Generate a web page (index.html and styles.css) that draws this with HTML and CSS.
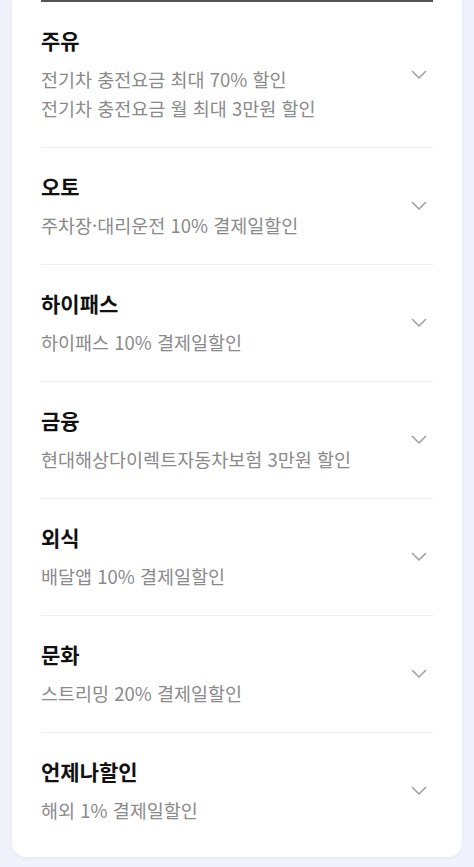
FILE: index.html
```html
<!DOCTYPE html>
<html lang="ko">
<head>
  <meta charset="UTF-8">
  <meta name="viewport" content="width=device-width, initial-scale=1.0">
  <title>카드 혜택</title>
  <link rel="stylesheet" href="styles.css">
</head>
<body>
  <div class="card">
    <ul class="benefits">
      <li class="benefit">
        <div class="text">
          <div class="name">주유</div>
          <div class="desc">전기차 충전요금 최대 70% 할인</div>
          <div class="desc">전기차 충전요금 월 최대 3만원 할인</div>
        </div>
        <svg class="chevron" viewBox="0 0 16 10"><path d="M1.5 1.5 L8 8 L14.5 1.5"/></svg>
      </li>
      <li class="benefit">
        <div class="text">
          <div class="name">오토</div>
          <div class="desc">주차장·대리운전 10% 결제일할인</div>
        </div>
        <svg class="chevron" viewBox="0 0 16 10"><path d="M1.5 1.5 L8 8 L14.5 1.5"/></svg>
      </li>
      <li class="benefit">
        <div class="text">
          <div class="name">하이패스</div>
          <div class="desc">하이패스 10% 결제일할인</div>
        </div>
        <svg class="chevron" viewBox="0 0 16 10"><path d="M1.5 1.5 L8 8 L14.5 1.5"/></svg>
      </li>
      <li class="benefit">
        <div class="text">
          <div class="name">금융</div>
          <div class="desc">현대해상다이렉트자동차보험 3만원 할인</div>
        </div>
        <svg class="chevron" viewBox="0 0 16 10"><path d="M1.5 1.5 L8 8 L14.5 1.5"/></svg>
      </li>
      <li class="benefit">
        <div class="text">
          <div class="name">외식</div>
          <div class="desc">배달앱 10% 결제일할인</div>
        </div>
        <svg class="chevron" viewBox="0 0 16 10"><path d="M1.5 1.5 L8 8 L14.5 1.5"/></svg>
      </li>
      <li class="benefit">
        <div class="text">
          <div class="name">문화</div>
          <div class="desc">스트리밍 20% 결제일할인</div>
        </div>
        <svg class="chevron" viewBox="0 0 16 10"><path d="M1.5 1.5 L8 8 L14.5 1.5"/></svg>
      </li>
      <li class="benefit">
        <div class="text">
          <div class="name">언제나할인</div>
          <div class="desc">해외 1% 결제일할인</div>
        </div>
        <svg class="chevron" viewBox="0 0 16 10"><path d="M1.5 1.5 L8 8 L14.5 1.5"/></svg>
      </li>
    </ul>
  </div>
</body>
</html>
```

FILE: styles.css
```css
body {
  margin: 0;
  padding: 0 12px 10px;
  background: #f0f3fb;
  font-family: "Noto Sans CJK KR", "Noto Sans", sans-serif;
}

.card {
  background: #ffffff;
  border-radius: 0 0 14px 14px;
  padding: 0 29px 8px;
  box-shadow: 0 1px 4px rgba(0, 0, 0, 0.06);
}

.benefits {
  list-style: none;
  margin: 0;
  padding: 0;
  border-top: 2px solid #555555;
}

.benefit {
  display: flex;
  align-items: center;
  justify-content: space-between;
  padding: 24px 0 24px;
  border-bottom: 1px solid #eeeeee;
}

.benefit:last-child {
  border-bottom: none;
}

.name {
  font-size: 21px;
  line-height: 28px;
  font-weight: 700;
  color: #111111;
  margin-bottom: 11px;
}

.desc {
  font-size: 18.5px;
  line-height: 29px;
  color: #8a8a8a;
}

.chevron {
  width: 16px;
  height: 10px;
  margin-right: 6px;
  fill: none;
  stroke: #a0a0a0;
  stroke-width: 1.6;
  stroke-linecap: round;
  stroke-linejoin: round;
}
```
